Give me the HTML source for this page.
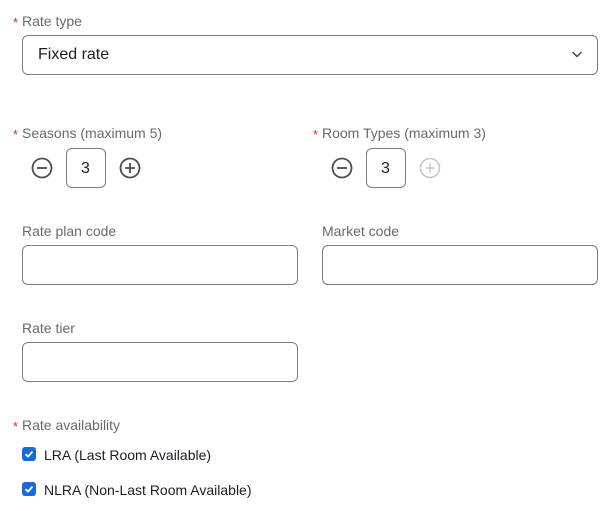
<!DOCTYPE html>
<html><head><style>
body{margin:0;width:610px;height:511px;background:#fff;font-family:"Liberation Sans",sans-serif;position:relative;overflow:hidden}
.a{position:absolute}
.lbl{font-size:14px;color:#666a70;line-height:16px}
.req:before{content:"*";color:#d93025;position:absolute;left:-9px;top:2px;font-size:13px}
.box{border:1px solid #7a7d82;border-radius:6px;box-sizing:border-box;background:#fff}
.val{font-size:16px;color:#1b1d28}
.cb{width:14px;height:14px;background:#1a6ad6;border-radius:3px}
.ct{font-size:14px;color:#1b1d28}
</style></head><body>
<div class="a lbl req" style="left:22px;top:13px">Rate type</div>
<div class="a box" style="left:22px;top:35px;width:576px;height:40px"></div>
<div class="a val" style="left:38px;top:46px">Fixed rate</div>
<svg class="a" style="left:571px;top:49px" width="12" height="10"><path d="M1.5 3 L6 7.5 L10.5 3" fill="none" stroke="#3a3d42" stroke-width="1.4"/></svg>

<div class="a lbl req" style="left:22px;top:125px">Seasons (maximum 5)</div>
<svg class="a" style="left:30px;top:156px" width="24" height="24"><circle cx="12" cy="12" r="9.5" fill="none" stroke="#4a4d52" stroke-width="1.8"/><path d="M7 12H17" stroke="#4a4d52" stroke-width="1.8"/></svg>
<div class="a box" style="left:66px;top:148px;width:40px;height:40px"></div>
<div class="a val" style="left:81px;top:160px">3</div>
<svg class="a" style="left:118px;top:156px" width="24" height="24"><circle cx="12" cy="12" r="9.5" fill="none" stroke="#4a4d52" stroke-width="1.8"/><path d="M7 12H17M12 7V17" stroke="#4a4d52" stroke-width="1.8"/></svg>

<div class="a lbl req" style="left:322px;top:125px">Room Types (maximum 3)</div>
<svg class="a" style="left:330px;top:156px" width="24" height="24"><circle cx="12" cy="12" r="9.5" fill="none" stroke="#4a4d52" stroke-width="1.8"/><path d="M7 12H17" stroke="#4a4d52" stroke-width="1.8"/></svg>
<div class="a box" style="left:366px;top:148px;width:40px;height:40px"></div>
<div class="a val" style="left:381px;top:160px">3</div>
<svg class="a" style="left:418px;top:156px" width="24" height="24"><circle cx="12" cy="12" r="9.5" fill="none" stroke="#c4c6c9" stroke-width="1.5"/><path d="M7.5 12H16.5M12 7.5V16.5" stroke="#c4c6c9" stroke-width="1.5"/></svg>

<div class="a lbl" style="left:22px;top:223px">Rate plan code</div>
<div class="a box" style="left:22px;top:245px;width:276px;height:40px"></div>
<div class="a lbl" style="left:322px;top:223px">Market code</div>
<div class="a box" style="left:322px;top:245px;width:276px;height:40px"></div>

<div class="a lbl" style="left:22px;top:320px">Rate tier</div>
<div class="a box" style="left:22px;top:342px;width:276px;height:40px"></div>

<div class="a lbl req" style="left:22px;top:417px">Rate availability</div>
<div class="a cb" style="left:22px;top:447px"></div>
<svg class="a" style="left:22px;top:447px" width="14" height="14"><path d="M3.5 7.2 L6 9.6 L10.5 4.6" fill="none" stroke="#fff" stroke-width="1.8"/></svg>
<div class="a ct" style="left:44px;top:447px">LRA (Last Room Available)</div>
<div class="a cb" style="left:22px;top:482px"></div>
<svg class="a" style="left:22px;top:482px" width="14" height="14"><path d="M3.5 7.2 L6 9.6 L10.5 4.6" fill="none" stroke="#fff" stroke-width="1.8"/></svg>
<div class="a ct" style="left:44px;top:482px">NLRA (Non-Last Room Available)</div>
</body></html>
